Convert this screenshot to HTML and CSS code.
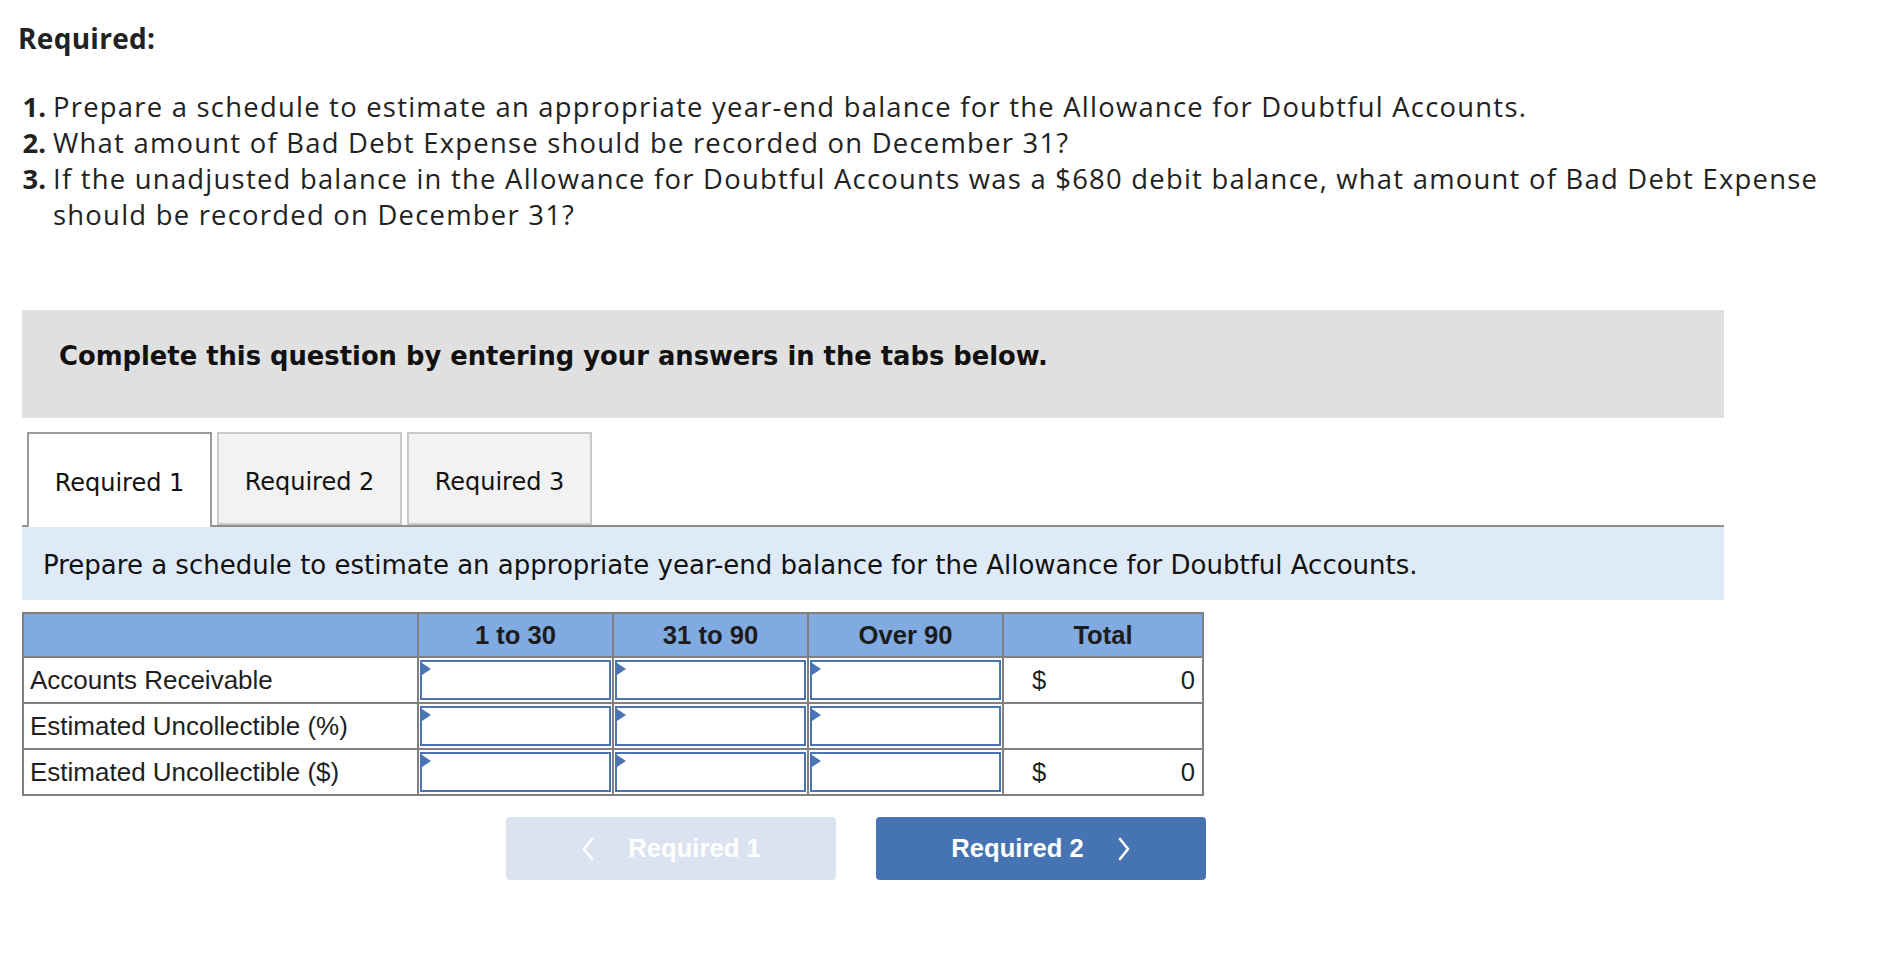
FILE: index.html
```html
<!DOCTYPE html>
<html lang="en">
<head>
<meta charset="utf-8">
<title>Required</title>
<link rel="stylesheet" href="styles.css">
</head>
<body>
<div class="page">
  <h2 class="req-title">Required:</h2>
  <ol class="req-list">
    <li><span class="num">1.</span><span class="txt">Prepare a schedule to estimate an appropriate year-end balance for the Allowance for Doubtful Accounts.</span></li>
    <li><span class="num">2.</span><span class="txt">What amount of Bad Debt Expense should be recorded on December 31?</span></li>
    <li><span class="num">3.</span><span class="txt">If the unadjusted balance in the Allowance for Doubtful Accounts was a $680 debit balance, what amount of Bad Debt Expense should be recorded on December 31?</span></li>
  </ol>

  <div class="prompt">Complete this question by entering your answers in the tabs below.</div>

  <div class="tabs">
    <div class="tab active">Required 1</div>
    <div class="tab">Required 2</div>
    <div class="tab">Required 3</div>
  </div>

  <div class="instr">Prepare a schedule to estimate an appropriate year-end balance for the Allowance for Doubtful Accounts.</div>

  <table class="sched">
    <colgroup>
      <col class="c-label">
      <col class="c-num">
      <col class="c-num">
      <col class="c-num">
      <col class="c-total">
    </colgroup>
    <thead>
      <tr>
        <th></th>
        <th>1 to 30</th>
        <th>31 to 90</th>
        <th>Over 90</th>
        <th>Total</th>
      </tr>
    </thead>
    <tbody>
      <tr>
        <td class="label">Accounts Receivable</td>
        <td class="in"><div class="box"></div></td>
        <td class="in"><div class="box"></div></td>
        <td class="in"><div class="box"></div></td>
        <td class="total"><div class="amt"><span>$</span><span>0</span></div></td>
      </tr>
      <tr>
        <td class="label">Estimated Uncollectible (%)</td>
        <td class="in"><div class="box"></div></td>
        <td class="in"><div class="box"></div></td>
        <td class="in"><div class="box"></div></td>
        <td class="total"></td>
      </tr>
      <tr>
        <td class="label">Estimated Uncollectible ($)</td>
        <td class="in"><div class="box"></div></td>
        <td class="in"><div class="box"></div></td>
        <td class="in"><div class="box"></div></td>
        <td class="total"><div class="amt"><span>$</span><span>0</span></div></td>
      </tr>
    </tbody>
  </table>

  <div class="nav">
    <div class="btn prev">
      <svg class="chev" width="14" height="24" viewBox="0 0 14 24"><polyline points="11,2 3,12 11,22" fill="none" stroke="#fff" stroke-width="2.6" stroke-linecap="round" stroke-linejoin="round"/></svg>
      <span>Required 1</span>
    </div>
    <div class="btn next">
      <span>Required 2</span>
      <svg class="chev" width="14" height="24" viewBox="0 0 14 24"><polyline points="3,2 11,12 3,22" fill="none" stroke="#fff" stroke-width="2.6" stroke-linecap="round" stroke-linejoin="round"/></svg>
    </div>
  </div>
</div>
</body>
</html>
```

FILE: styles.css
```css
html, body {
  margin: 0;
  padding: 0;
  background: #ffffff;
}

.page {
  padding: 20px 0 0 0;
  color: #1f1f1f;
}

.req-title {
  margin: 0 0 0 18px;
  font-family: "Open Sans", sans-serif;
  font-weight: 700;
  font-size: 28px;
  letter-spacing: 0.3px;
  line-height: 36px;
  color: #222;
}

.req-list {
  list-style: none;
  margin: 33px 0 0 0;
  padding: 0 30px 0 18px;
  font-family: "Open Sans", sans-serif;
  font-size: 27.4px;
  letter-spacing: 1.25px;
  line-height: 36px;
  color: #222;
}

.req-list li {
  display: flex;
}

.req-list .num {
  flex: 0 0 28px;
  text-align: right;
  font-weight: 700;
  letter-spacing: 0;
  margin-right: 7px;
}

.req-list .txt {
  flex: 1;
}

.prompt {
  margin: 77px 0 0 22px;
  width: 1702px;
  height: 108px;
  box-sizing: border-box;
  padding: 31px 0 0 37px;
  background: #e0e0e0;
  font-family: "DejaVu Sans", Verdana, sans-serif;
  font-weight: 700;
  font-size: 25.8px;
  line-height: 30px;
  color: #111;
}

.tabs {
  margin: 14px 0 0 22px;
  width: 1702px;
  box-sizing: border-box;
  display: flex;
  gap: 5px;
  padding-left: 5px;
  border-bottom: 2px solid #8e8e8e;
  height: 95px;
}

.tab {
  width: 185px;
  height: 93px;
  box-sizing: border-box;
  border: 2px solid #c9c9c9;
  background: #f2f2f2;
  display: flex;
  align-items: center;
  justify-content: center;
  padding-top: 6px;
  font-family: "DejaVu Sans", Verdana, sans-serif;
  font-size: 24px;
  color: #111;
}

.tab.active {
  border-color: #9a9a9a;
  border-bottom: none;
  background: #fff;
  height: 95px;
  padding-bottom: 2px;
}

.instr {
  margin: 0 0 0 22px;
  width: 1702px;
  height: 73px;
  box-sizing: border-box;
  padding: 2px 0 0 21px;
  display: flex;
  align-items: center;
  background: #dfeaf7;
  font-family: "DejaVu Sans", Verdana, sans-serif;
  font-size: 26px;
  line-height: 30px;
  color: #111;
}

.sched {
  margin: 12px 0 0 22px;
  border-collapse: collapse;
  table-layout: fixed;
  width: 1181px;
  font-family: "Liberation Sans", Arial, sans-serif;
  font-size: 25.6px;
  color: #1f1f1f;
}

.c-label { width: 395px; }
.c-num { width: 195px; }
.c-total { width: 200px; }

.sched th,
.sched td {
  border: 2px solid #808080;
  padding: 0;
}

.sched th {
  background: #80aae0;
  height: 42px;
  font-weight: 700;
  text-align: center;
  color: #1c1c1c;
}

.sched td {
  height: 42px;
}

.sched td.label {
  padding-left: 6px;
  white-space: nowrap;
  font-size: 26px;
}

.sched td.in {
  padding: 1px;
}

.box {
  position: relative;
  height: 40px;
  box-sizing: border-box;
  border: 2px solid #4a74b4;
  background: #fff;
}

.box::before {
  content: "";
  position: absolute;
  left: 0;
  top: 1px;
  width: 0;
  height: 0;
  border-left: 9px solid #4a74b4;
  border-top: 6px solid transparent;
  border-bottom: 6px solid transparent;
}

.amt {
  display: flex;
  justify-content: space-between;
  padding: 0 7px 0 28px;
}

.nav {
  margin: 21px 0 0 506px;
  display: flex;
  gap: 40px;
}

.btn {
  width: 330px;
  height: 63px;
  border-radius: 4px;
  display: flex;
  align-items: center;
  justify-content: center;
  gap: 33px;
  font-family: "Liberation Sans", Arial, sans-serif;
  font-weight: 700;
  font-size: 25.6px;
  color: #fff;
}

.btn.prev {
  background: #dae3ef;
}

.btn.next {
  background: #4673b1;
}

.chev {
  display: block;
}
```
